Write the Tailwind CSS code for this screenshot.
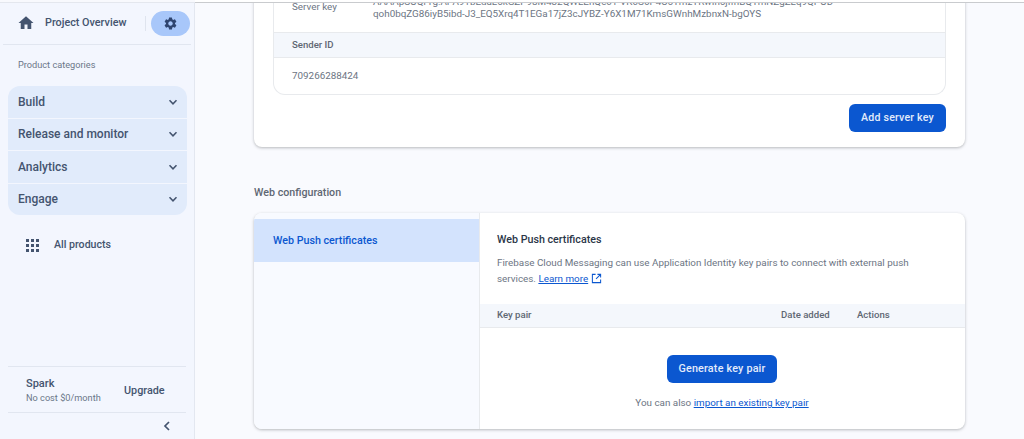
<!DOCTYPE html>
<html lang="en">
<head>
  <meta charset="UTF-8" />
  <title>Cloud Messaging settings</title>
  <script src="https://cdn.jsdelivr.net/npm/@tailwindcss/browser@4"></script>
</head>
<body class="h-[439px] w-[1024px] overflow-hidden bg-[#f9fafe] font-['Roboto',sans-serif] text-[#5f6b7c]">

  <!-- Top edge of the app bar -->
  <div class="absolute top-0 left-0 z-10 flex h-[3px] w-full">
    <div class="w-[195px] border-b border-[#e4e7ee] bg-[#f8f9fd]"></div>
    <div class="flex-1 border-b border-[#c9cbce] bg-white"></div>
  </div>

  <div class="flex h-[439px]">
    <!-- Sidebar -->
    <aside class="flex h-full w-[195px] shrink-0 flex-col border-r border-[#e3e7f0] bg-[#f3f6fe] text-[#44546f]">
      <div class="mx-[3px] flex h-[45px] shrink-0 items-center border-b border-[#e1e6f0] pt-[2px]">
        <svg class="ml-[14px] h-[18px] w-[18px]" viewBox="0 0 24 24" fill="#44546f"><path d="M10 20v-6h4v6h5v-8h3L12 3 2 12h3v8z"/></svg>
        <span class="ml-[10px] w-[100px] text-[10.8px] font-medium">Project Overview</span>
        <span class="h-[15px] w-px bg-[#dfe4ee]"></span>
        <span class="ml-[5px] flex h-[25px] w-[39px] items-center justify-center rounded-full bg-[#a8c7fa]">
          <svg class="h-[15px] w-[15px]" viewBox="0 0 24 24" fill="#2f4570"><path d="M19.14 12.94c.04-.3.06-.61.06-.94 0-.32-.02-.64-.07-.94l2.03-1.58a.49.49 0 0 0 .12-.61l-1.92-3.32a.49.49 0 0 0-.59-.22l-2.39.96c-.5-.38-1.03-.7-1.62-.94l-.36-2.54a.48.48 0 0 0-.48-.41h-3.84c-.24 0-.43.17-.47.41l-.36 2.54c-.59.24-1.13.57-1.62.94l-2.39-.96c-.22-.08-.47 0-.59.22L2.74 8.87c-.12.21-.08.47.12.61l2.03 1.58c-.05.3-.09.63-.09.94s.02.64.07.94l-2.03 1.58a.49.49 0 0 0-.12.61l1.92 3.32c.12.22.37.29.59.22l2.39-.96c.5.38 1.03.7 1.62.94l.36 2.54c.05.24.24.41.48.41h3.84c.24 0 .44-.17.47-.41l.36-2.54c.59-.24 1.13-.56 1.62-.94l2.39.96c.22.08.47 0 .59-.22l1.92-3.32c.12-.22.07-.47-.12-.61l-2.01-1.58zM12 15.6c-1.98 0-3.6-1.62-3.6-3.6s1.62-3.6 3.6-3.6 3.6 1.62 3.6 3.6-1.62 3.6-3.6 3.6z"/></svg>
        </span>
      </div>
      <p class="mt-[13px] ml-[18px] text-[9.2px] leading-[14px] text-[#6b7789]">Product categories</p>
      <!-- Accordion -->
      <div class="mx-[8px] mt-[14px] flex w-[179px] flex-col gap-px overflow-hidden rounded-[12px] text-[12px] font-medium">
        <div class="flex h-[31.5px] items-center justify-between bg-[#e1ebfb] pr-[9px] pl-[10px]">Build<svg class="h-[10px] w-[10px]" viewBox="0 0 10 10" fill="none" stroke="#44546f" stroke-width="1.5"><path d="M1.5 3.2 5 6.8l3.5-3.6"/></svg></div>
        <div class="flex h-[31.5px] items-center justify-between bg-[#e1ebfb] pr-[9px] pl-[10px]">Release and monitor<svg class="h-[10px] w-[10px]" viewBox="0 0 10 10" fill="none" stroke="#44546f" stroke-width="1.5"><path d="M1.5 3.2 5 6.8l3.5-3.6"/></svg></div>
        <div class="flex h-[31.5px] items-center justify-between bg-[#e1ebfb] pr-[9px] pl-[10px]">Analytics<svg class="h-[10px] w-[10px]" viewBox="0 0 10 10" fill="none" stroke="#44546f" stroke-width="1.5"><path d="M1.5 3.2 5 6.8l3.5-3.6"/></svg></div>
        <div class="flex h-[31.5px] items-center justify-between bg-[#e1ebfb] pr-[9px] pl-[10px]">Engage<svg class="h-[10px] w-[10px]" viewBox="0 0 10 10" fill="none" stroke="#44546f" stroke-width="1.5"><path d="M1.5 3.2 5 6.8l3.5-3.6"/></svg></div>
      </div>
      <div class="mt-[22px] ml-[26px] flex items-center text-[10.6px] leading-[16px] font-medium">
        <svg class="h-[13px] w-[13px]" viewBox="0 0 13 13" fill="#44546f"><path d="M0 0h3v3H0zM5 0h3v3H5zM10 0h3v3h-3zM0 5h3v3H0zM5 5h3v3H5zM10 5h3v3h-3zM0 10h3v3H0zM5 10h3v3H5zM10 10h3v3h-3z"/></svg>
        <span class="ml-[15px]">All products</span>
      </div>
      <!-- Plan + collapse -->
      <div class="mx-[8px] mt-auto flex h-[47px] items-center border-y border-[#e1e6f0] pl-[18px]">
        <div class="w-[98px] pt-[2px]">
          <p class="text-[11px] leading-[14px] font-medium">Spark</p>
          <p class="text-[9.2px] leading-[13px] text-[#6b7789]">No cost $0/month</p>
        </div>
        <span class="pt-[3px] text-[10.8px] font-medium">Upgrade</span>
      </div>
      <div class="flex h-[26px] shrink-0 items-center justify-end pr-[21px]">
        <svg class="h-[12px] w-[12px]" viewBox="0 0 12 12" fill="none" stroke="#44546f" stroke-width="1.7"><path d="M8 2 4 6l4 4"/></svg>
      </div>
    </aside>

    <!-- Main content -->
    <main class="flex min-w-0 flex-1 flex-col pl-[59px]">
      <!-- Cloud Messaging API card, scrolled -->
      <section class="mt-[-19px] flex h-[166px] w-[711px] shrink-0 flex-col rounded-b-[8px] bg-white px-[19px] shadow-[0_1px_3px_rgba(60,64,67,0.35)]">
        <div class="flex h-[114px] shrink-0 flex-col overflow-hidden rounded-b-[12px] border border-t-0 border-[#e8eaed] text-[9.85px]">
          <div class="flex h-[52px] items-center border-b border-[#e8eaed]">
            <span class="w-[99px] shrink-0 pt-[2px] pl-[18px] text-[#6c7583]">Server key</span>
            <p class="pt-[3px] text-[9.85px] leading-[12px] whitespace-nowrap text-[#6c7583]">AAAApSOQrYg:APA91bEdaL5kGZP98M4J2QWLEnQc01-VK0S6P4U5YmzYRwIn5jIfnBQYmNZgZLq9QPOD<br>qoh0bqZG86iyB5ibd-J3_EQ5Xrq4T1EGa17jZ3cJYBZ-Y6X1M71KmsGWnhMzbnxN-bgOYS</p>
          </div>
          <div class="flex h-[25px] items-center border-b border-[#e8eaed] bg-[#f4f7fc] pl-[18px] text-[9.6px] font-medium text-[#5f6773]">Sender ID</div>
          <div class="flex flex-1 items-center pl-[18px] text-[#6c7583]">709266288424</div>
        </div>
        <div class="mt-[9px] flex justify-end">
          <button class="h-[28px] w-[97px] rounded-[6px] bg-[#0b57d0] text-[10.6px] font-medium tracking-[0.2px] text-[#e4ecfb]">Add server key</button>
        </div>
      </section>

      <h2 class="mt-[39px] text-[10.7px] leading-[14px] font-medium text-[#5f6773]">Web configuration</h2>

      <!-- Web Push certificates card -->
      <section class="mt-[13px] flex h-[216px] w-[711px] shrink-0 overflow-hidden rounded-[8px] bg-white shadow-[0_1px_3px_rgba(60,64,67,0.35)]">
        <div class="w-[225px] shrink-0 bg-[#f8faff] pt-[6px]">
          <div class="flex h-[43px] items-center bg-[#d3e3fd] pl-[19px] text-[10.7px] font-medium text-[#0b57d0]"><span class="pt-[1px]">Web Push certificates</span></div>
        </div>
        <div class="flex min-w-0 flex-1 flex-col border-l border-[#e8eaed]">
          <h3 class="mt-[20px] ml-[17px] text-[10.7px] leading-[14px] font-medium text-[#2b3648]">Web Push certificates</h3>
          <p class="mt-[8px] ml-[17px] w-[440px] text-[9.85px] leading-[15.5px] text-[#6c7583]">Firebase Cloud Messaging can use Application Identity key pairs to connect with external push services. <a class="text-[#0b57d0] underline" href="#">Learn more</a>
            <svg class="inline h-[11px] w-[11px] align-[-2px]" viewBox="0 0 12 12" fill="none" stroke="#0b57d0" stroke-width="1.1"><path d="M5 1.5H1.5v9h9V7M7 1.5h3.5V5M10.5 1.5 5.5 6.5"/></svg>
          </p>
          <div class="mt-[18px] flex h-[24px] shrink-0 items-center border-b border-[#e8eaed] bg-[#f4f7fc] pl-[17px] text-[9.6px] font-medium text-[#5f6773]">
            <span class="w-[284px]">Key pair</span>
            <span class="w-[76px]">Date added</span>
            <span>Actions</span>
          </div>
          <div class="flex flex-col items-center pt-[27px] pr-[1px]">
            <button class="h-[28px] w-[110px] rounded-[6px] bg-[#0b57d0] pt-[1px] text-[10.75px] font-medium tracking-[0.2px] text-[#e4ecfb]">Generate key pair</button>
            <p class="mt-[13px] text-[9.85px] leading-[14px] text-[#6c7583]">You can also <a class="text-[#0b57d0] underline" href="#">import an existing key pair</a></p>
          </div>
        </div>
      </section>
    </main>
  </div>
</body>
</html>
